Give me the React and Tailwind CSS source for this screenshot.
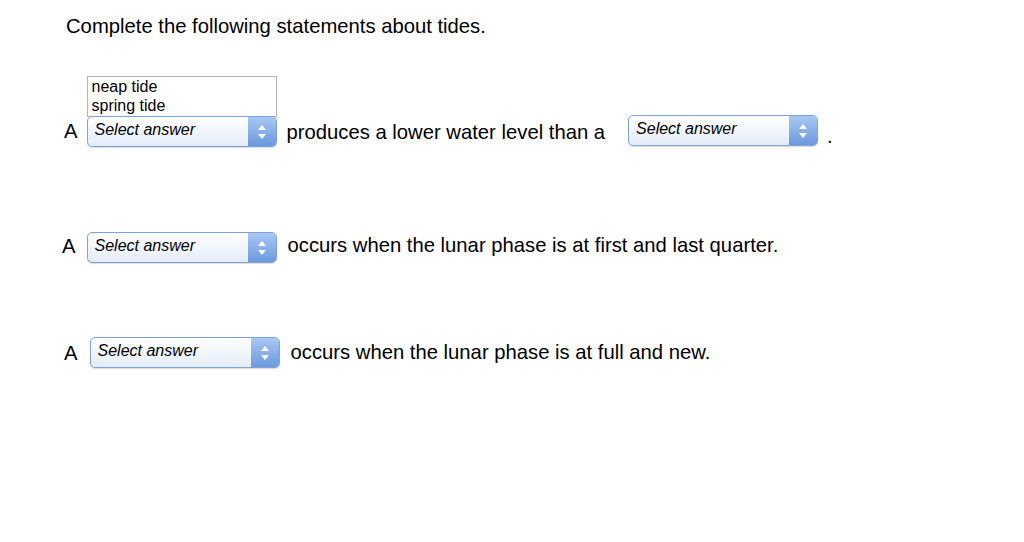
import React from 'react';

const SelectBox = () => (
  <div className="relative flex h-[31px] w-[190px] items-stretch rounded-[5px] border border-[#7fa2d9] bg-gradient-to-b from-white to-[#e4ecf9] shadow-[0_1px_1px_rgba(0,0,0,0.15)]">
    <span className="flex-1 pl-[7px] pt-[3px] text-[16px] italic leading-[20px] text-black">Select answer</span>
    <span className="flex w-[28px] flex-col items-center justify-center gap-[4px] rounded-r-[4px] bg-gradient-to-b from-[#a9c8f3] to-[#6b98dd]">
      <svg width="8" height="5" viewBox="0 0 8 5"><path d="M4 0L8 5H0z" fill="#fff" /></svg>
      <svg width="8" height="5" viewBox="0 0 8 5"><path d="M0 0H8L4 5z" fill="#fff" /></svg>
    </span>
  </div>
);

const Letter = ({ className }) => (
  <span className={`text-[20.25px] leading-[23px] ${className}`}>A</span>
);

export default function App() {
  return (
    <div className="min-h-[542px] w-[1024px] bg-white font-['Liberation_Sans',Arial,sans-serif] text-black">
      <h1 className="pl-[66px] pt-[15px] text-[20.25px] font-normal leading-[23px]">
        Complete the following statements about tides.
      </h1>

      {/* row 1 with open list */}
      <div className="mt-[78px] flex items-center pl-[64px]">
        <Letter className="mr-[9px]" />
        <div className="relative">
          <div className="absolute bottom-[30px] left-0 h-[41px] w-[190px] border border-[#b5b5b5] bg-white pl-[4px] text-[16px] leading-[19px]">
            <div>neap tide</div>
            <div>spring tide</div>
          </div>
          <SelectBox />
        </div>
        <span className="ml-[10px] translate-y-[1px] text-[20.25px] leading-[23px]">produces a lower water level than a</span>
        <div className="ml-[23px] -translate-y-[1px]">
          <SelectBox />
        </div>
        <span className="ml-[9px] translate-y-[5px] text-[20.25px] leading-[23px]">.</span>
      </div>

      {/* row 2 */}
      <div className="mt-[85px] flex items-center pl-[62px]">
        <Letter className="mr-[11px] -translate-y-[1px]" />
        <SelectBox />
        <span className="ml-[11px] -translate-y-[2px] text-[20.25px] leading-[23px]">occurs when the lunar phase is at first and last quarter.</span>
      </div>

      {/* row 3 */}
      <div className="mt-[74px] flex items-center pl-[64px]">
        <Letter className="mr-[12px] translate-y-[1px]" />
        <SelectBox />
        <span className="ml-[11px] text-[20.25px] leading-[23px]">occurs when the lunar phase is at full and new.</span>
      </div>
    </div>
  );
}
